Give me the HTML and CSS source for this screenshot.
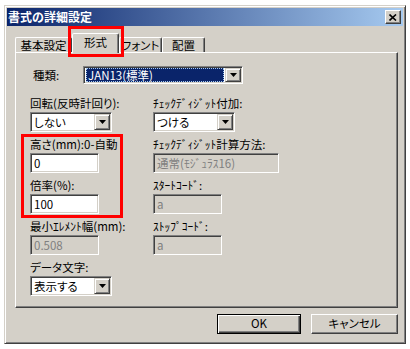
FILE: index.html
```html
<!DOCTYPE html>
<html lang="ja">
<head>
    <meta charset="UTF-8">
    <meta name="viewport" content="width=device-width, initial-scale=1.0">
    <title>書式の詳細設定</title>
    <link rel="stylesheet" href="styles.css">
</head>
<body>
    <div class="screen">
        <div class="window">
            <div class="titlebar">
                <span class="title">書式の詳細設定</span>
                <span class="close">
                    <svg width="8" height="7" viewBox="0 0 8 7"><path d="M0.5 0.5 L7 6.5 M7 0.5 L0.5 6.5" stroke="#000" stroke-width="1.6"/></svg>
                </span>
            </div>
            <div class="content">
                <div class="tabs">
                    <div class="tab tab-basic">基本設定</div>
                    <div class="tab tab-format active">形式</div>
                    <div class="tab tab-font">フォント</div>
                    <div class="tab tab-place">配置</div>
                </div>
                <div class="panel">
                    <div class="row-kind">
                        <span class="label label-kind">種類:</span>
                        <div class="field select select-kind">
                            <span class="value selected">JAN13(標準)</span>
                            <span class="drop"><svg width="7" height="4" viewBox="0 0 7 4"><polygon points="0,0 7,0 3.5,4" fill="#000"/></svg></span>
                        </div>
                    </div>
                    <div class="columns">
                        <div class="col col-left">
                            <div class="group">
                                <span class="label">回転(反時計回り):</span>
                                <div class="field select w-82">
                                    <span class="value">しない</span>
                                    <span class="drop"><svg width="7" height="4" viewBox="0 0 7 4"><polygon points="0,0 7,0 3.5,4" fill="#000"/></svg></span>
                                </div>
                            </div>
                            <div class="group">
                                <span class="label">高さ(mm):0-自動</span>
                                <div class="field w-69"><span class="value">0</span></div>
                            </div>
                            <div class="group">
                                <span class="label">倍率(%):</span>
                                <div class="field w-69"><span class="value">100</span></div>
                            </div>
                            <div class="group">
                                <span class="label">最小ｴﾚﾒﾝﾄ幅(mm):</span>
                                <div class="field disabled w-69"><span class="value">0.508</span></div>
                            </div>
                            <div class="group">
                                <span class="label">データ文字:</span>
                                <div class="field select w-82">
                                    <span class="value">表示する</span>
                                    <span class="drop"><svg width="7" height="4" viewBox="0 0 7 4"><polygon points="0,0 7,0 3.5,4" fill="#000"/></svg></span>
                                </div>
                            </div>
                        </div>
                        <div class="col col-right">
                            <div class="group">
                                <span class="label">ﾁｪｯｸﾃﾞｨｼﾞｯﾄ付加:</span>
                                <div class="field select w-82">
                                    <span class="value">つける</span>
                                    <span class="drop"><svg width="7" height="4" viewBox="0 0 7 4"><polygon points="0,0 7,0 3.5,4" fill="#000"/></svg></span>
                                </div>
                            </div>
                            <div class="group">
                                <span class="label">ﾁｪｯｸﾃﾞｨｼﾞｯﾄ計算方法:</span>
                                <div class="field disabled w-126"><span class="value">通常(ﾓｼﾞｭﾗｽ16)</span></div>
                            </div>
                            <div class="group">
                                <span class="label">ｽﾀｰﾄｺｰﾄﾞ:</span>
                                <div class="field disabled w-69"><span class="value">a</span></div>
                            </div>
                            <div class="group">
                                <span class="label">ｽﾄｯﾌﾟｺｰﾄﾞ:</span>
                                <div class="field disabled w-69"><span class="value">a</span></div>
                            </div>
                        </div>
                    </div>
                </div>
                <div class="buttons">
                    <div class="button default">OK</div>
                    <div class="button">キャンセル</div>
                </div>
            </div>
        </div>
        <div class="mark mark-tab"></div>
        <div class="mark mark-size"></div>
    </div>
</body>
</html>
```

FILE: styles.css
```css
* {
    margin: 0;
    padding: 0;
    box-sizing: border-box;
}
body {
    background-color: #fff;
    font-family: "Noto Sans CJK JP", sans-serif;
    font-size: 11.5px;
    font-feature-settings: "palt";
    color: #000;
}
.screen {
    position: relative;
    width: 410px;
    height: 349px;
    padding: 5px 0 0 4px;
}
.window {
    width: 402px;
    height: 339px;
    background-color: #d4d0c8;
    border: 1px solid;
    border-color: #d4d0c8 #404040 #404040 #d4d0c8;
    box-shadow: inset 1px 1px #fff, inset -1px -1px #808080;
    padding: 2px;
    display: flex;
    flex-direction: column;
}
.titlebar {
    height: 18px;
    background: linear-gradient(to right, #0a246a, #a6caf0);
    display: flex;
    align-items: center;
    justify-content: space-between;
    padding: 0 2px 0 1px;
}
.title {
    color: #fff;
    font-weight: bold;
    font-size: 12px;
    line-height: 18px;
    font-feature-settings: normal;
}
.close {
    width: 16px;
    height: 14px;
    background-color: #d4d0c8;
    border: 1px solid;
    border-color: #fff #404040 #404040 #fff;
    box-shadow: inset -1px -1px #808080;
    display: flex;
    align-items: center;
    justify-content: center;
}
.close svg {
    display: block;
    margin-left: -1px;
}
.content {
    flex: 1;
    padding: 7px 5px 0 8px;
}
.tabs {
    display: flex;
    align-items: flex-end;
    height: 19px;
}
.tab {
    height: 15px;
    line-height: 14px;
    text-align: center;
    border: 1px solid;
    border-bottom: none;
    border-color: #fff #404040 transparent #fff;
    border-radius: 2px 2px 0 0;
    box-shadow: inset -1px 0 #808080;
    white-space: nowrap;
}
.tab.active {
    position: relative;
    z-index: 1;
    height: 20px;
    margin-bottom: -1px;
    line-height: 16px;
    background-color: #d4d0c8;
}
.tab-basic {
    width: 57px;
}
.tab-format {
    width: 47px;
}
.tab-font,
.tab-place {
    width: 43px;
}
.panel {
    height: 256px;
    border: 1px solid;
    border-color: #fff #404040 #404040 #fff;
    box-shadow: inset -1px -1px #808080;
    padding: 13px 0 0 14px;
}
.row-kind {
    display: flex;
    align-items: center;
    height: 18px;
}
.label-kind {
    width: 53px;
    padding-left: 3px;
}
.columns {
    display: flex;
    margin-top: 12px;
}
.col {
    display: flex;
    flex-direction: column;
    gap: 5px;
}
.col-left {
    width: 123px;
}
.group {
    display: flex;
    flex-direction: column;
    align-items: flex-start;
    gap: 2px;
}
.label {
    height: 14px;
    line-height: 14px;
    white-space: nowrap;
}
.field {
    display: flex;
    align-items: center;
    height: 20px;
    background-color: #fff;
    border: 1px solid;
    border-color: #808080 #fff #fff #808080;
    box-shadow: inset 1px 1px #404040, inset -1px -1px #d4d0c8;
    padding: 1px;
    white-space: nowrap;
    overflow: hidden;
}
.field .value {
    flex: 1;
    line-height: 16px;
    padding-left: 2px;
}
.field.disabled {
    background-color: #d4d0c8;
    color: #808080;
}
.select-kind {
    width: 160px;
    height: 18px;
}
.select-kind .value {
    line-height: 14px;
}
.selected {
    background-color: #0a246a;
    color: #fff;
    margin: 0 1px;
    outline: 1px dotted #a6caf0;
    outline-offset: -1px;
}
.w-69 {
    width: 69px;
}
.w-82 {
    width: 82px;
}
.w-126 {
    width: 126px;
}
.drop {
    flex: none;
    width: 16px;
    height: 16px;
    background-color: #d4d0c8;
    border: 1px solid;
    border-color: #d4d0c8 #404040 #404040 #d4d0c8;
    box-shadow: inset 1px 1px #fff, inset -1px -1px #808080;
    display: flex;
    align-items: center;
    justify-content: center;
}
.select-kind .drop {
    height: 14px;
}
.drop svg {
    display: block;
}
.buttons {
    display: flex;
    justify-content: flex-end;
    gap: 10px;
    margin-top: 6px;
}
.button {
    width: 87px;
    height: 20px;
    line-height: 17px;
    text-align: center;
    border: 1px solid;
    border-color: #fff #404040 #404040 #fff;
    box-shadow: inset -1px -1px #808080;
}
.button.default {
    width: 84px;
    border-color: #000;
    box-shadow: inset 1px 1px #fff, inset -1px -1px #404040, inset -2px -2px #808080;
}
.mark {
    position: absolute;
    border: 3px solid #f00;
}
.mark-tab {
    left: 68px;
    top: 26px;
    width: 56px;
    height: 31px;
}
.mark-size {
    left: 21px;
    top: 134px;
    width: 102px;
    height: 84px;
}
```
